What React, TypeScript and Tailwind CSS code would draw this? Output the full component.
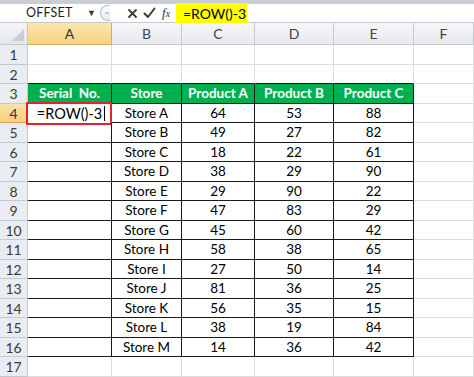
import React from "react";

const data: [string, number, number, number][] = [
  ["Store A", 64, 53, 88],
  ["Store B", 49, 27, 82],
  ["Store C", 18, 22, 61],
  ["Store D", 38, 29, 90],
  ["Store E", 29, 90, 22],
  ["Store F", 47, 83, 29],
  ["Store G", 45, 60, 42],
  ["Store H", 58, 38, 65],
  ["Store I", 27, 50, 14],
  ["Store J", 81, 36, 25],
  ["Store K", 56, 35, 15],
  ["Store L", 38, 19, 84],
  ["Store M", 14, 36, 42],
];

const widths = ["w-[84px]", "w-[70px]", "w-[73px]", "w-[79px]", "w-[80px]", "w-[60px]"];
const letters = ["A", "B", "C", "D", "E", "F"];

function Row({ n }: { n: number }) {
  const h = n % 2 === 1 ? "h-[20px]" : "h-[19px]";
  const selected = n === 4;
  const inTable = n >= 3 && n <= 16;
  const isHeader = n === 3;
  const rec = n >= 4 && n <= 16 ? data[n - 4] : null;
  const headerTexts = ["Serial  No.", "Store", "Product A", "Product B", "Product C"];

  return (
    <div className={`flex ${h}`}>
      <div
        className={`w-[28px] shrink-0 flex items-center justify-center border-r border-b text-[14px] ${
          selected
            ? "bg-gradient-to-b from-[#fbe3a6] to-[#f7cf7d] border-[#c9a453] text-[#333]"
            : "bg-[#e9edf2] border-[#c5c9cf] text-[#3a3a3a]"
        }`}
      >
        {n}
      </div>
      {widths.map((w, ci) => {
        const tableCol = ci <= 4;
        const cellIn = inTable && tableCol;
        let borderR = "border-[#dadcdd]";
        let borderB = "border-b-[#dadcdd]";
        if (cellIn) borderR = "border-[#1a1a1a]";
        if (cellIn || (n === 2 && tableCol)) borderB = "border-b-[#1a1a1a]";
        let content: React.ReactNode = null;
        let cls = "text-[13.5px] text-black";
        if (isHeader && tableCol) {
          content = headerTexts[ci];
          cls = "text-[13.5px] font-bold text-white bg-[#00b050] whitespace-pre";
        } else if (rec && tableCol) {
          if (ci === 1) content = rec[0];
          else if (ci > 1) content = String(rec[(ci - 1) as 1 | 2 | 3]);
        }
        return (
          <div
            key={ci}
            className={`${w} shrink-0 relative flex items-center justify-center border-r border-b ${borderR} ${borderB} ${cls}`}
          >
            {content}
            {selected && ci === 0 && (
              <div className="absolute -top-[2px] -left-[2px] -right-[1px] -bottom-[3px] border-2 border-[#e3222b] flex items-center justify-center text-[14.5px] text-black bg-white">
                <span className="ml-[4px]">=ROW()-3</span>
                <span className="ml-[2px] w-px h-[15px] bg-black" />
              </div>
            )}
          </div>
        );
      })}
    </div>
  );
}

export default function App() {
  return (
    <div
      className="w-[474px] h-[377px] overflow-hidden bg-white"
      style={{ fontFamily: "Lato, 'Noto Sans', sans-serif" }}
    >
      <div className="h-[4px] bg-[#c9ced5]" />
      <div className="h-[19px] flex items-center border-b border-[#c6cacf] bg-white relative">
        <div className="w-[100px] h-full flex items-center">
          <span className="ml-[26px] text-[12.5px] text-[#1f1f1f] tracking-[0.2px]">OFFSET</span>
          <span className="ml-auto mr-[4px] text-[9px] text-[#333]">▼</span>
        </div>
        <div className="w-[10px] h-[16px] rounded-l-full border border-r-0 border-[#b8bcc2] bg-gradient-to-b from-white to-[#e6e8eb] flex items-center justify-end">
          <span className="w-[4px] h-[2px] bg-[#c4c7cb] mr-[1px]" />
        </div>
        <div className="w-[66px] flex items-center">
          <svg className="ml-[17px]" width="11" height="11" viewBox="0 0 11 11">
            <path d="M2 2 L9 9 M9 2 L2 9" stroke="#3a3a3a" strokeWidth="1.8" strokeLinecap="round" />
          </svg>
          <svg className="ml-[5px]" width="13" height="12" viewBox="0 0 13 12">
            <path d="M1.5 6.5 L5 10 L11.5 1.5" stroke="#3a3a3a" strokeWidth="2" fill="none" strokeLinecap="round" strokeLinejoin="round" />
          </svg>
          <span className="ml-[6px] text-[13px] italic text-[#333]" style={{ fontFamily: "'Liberation Serif', serif" }}>
            f<span className="text-[10px]">x</span>
          </span>
        </div>
        <div className="absolute left-[176px] top-[-1px] w-[71px] h-[20px] bg-[#ffff00] flex items-center">
          <span className="ml-[7px] text-[14px] text-black">=ROW()-3</span>
        </div>
      </div>
      <div className="flex h-[22px]">
        <div className="w-[28px] shrink-0 border-r border-b border-[#c5c9cf] bg-gradient-to-b from-[#f4f5f7] to-[#e4e7eb] relative">
          <svg className="absolute right-[3px] bottom-[3px]" width="12" height="12" viewBox="0 0 12 12">
            <path d="M12 0 L12 12 L0 12 Z" fill="#c9ccd0" />
          </svg>
        </div>
        {widths.map((w, ci) => (
          <div
            key={ci}
            className={`${w} shrink-0 flex items-center justify-center border-r border-b text-[14px] ${
              ci === 0
                ? "bg-gradient-to-b from-[#fbe6ad] to-[#f8d283] border-[#d2ad5f] text-[#333]"
                : "bg-gradient-to-b from-[#f6f7f9] to-[#e6e9ed] border-[#c5c9cf] text-[#444]"
            }`}
          >
            {letters[ci]}
          </div>
        ))}
      </div>
      {Array.from({ length: 17 }, (_, i) => (
        <Row key={i} n={i + 1} />
      ))}
    </div>
  );
}
